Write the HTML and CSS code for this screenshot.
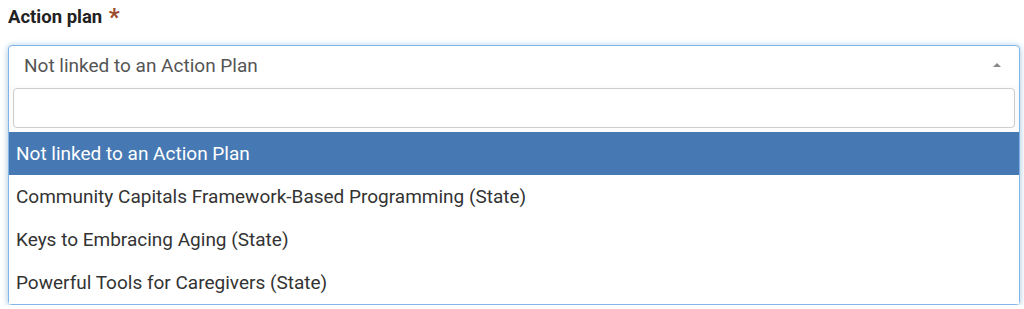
FILE: index.html
```html
<!DOCTYPE html>
<html lang="en">
<head>
  <meta charset="UTF-8" />
  <title>Action plan</title>
  <link rel="stylesheet" href="styles.css">
</head>
<body>

  <div class="form-group">
    <label class="field-label">Action plan <span class="required">*</span></label>

    <div class="select-box open">
      <div class="select-current">
        <span>Not linked to an Action Plan</span>
        <span class="arrow"></span>
      </div>
      <div class="select-dropdown">
        <div class="search-wrap">
          <input type="text" class="search" />
        </div>
        <ul class="options">
          <li class="highlighted">Not linked to an Action Plan</li>
          <li>Community Capitals Framework-Based Programming (State)</li>
          <li>Keys to Embracing Aging (State)</li>
          <li>Powerful Tools for Caregivers (State)</li>
        </ul>
      </div>
    </div>

    <span class="peek"></span>
  </div>

</body>
</html>
```

FILE: styles.css
```css
body {
  margin: 0;
  padding: 0 4px 0 8px;
  font-family: Roboto, 'Noto Sans', sans-serif;
  color: #333;
  background: #fff;
  overflow: hidden;
}

.form-group {
  position: relative;
}

.field-label {
  display: block;
  font-size: 18.5px;
  font-weight: bold;
  color: #222;
  padding-top: 6px;
  height: 39px;
  line-height: 22px;
}

.required {
  color: #9c4a2c;
  font-size: 24px;
  margin-left: 2px;
  vertical-align: -2px;
}

.select-box {
  position: relative;
  z-index: 2;
  border: 1px solid #7fb5e8;
  border-radius: 4px;
  background: #fff;
  box-shadow: 0 0 6px rgba(102, 175, 233, 0.45), 0 3px 6px rgba(0, 0, 0, 0.12);
}

.select-current {
  display: flex;
  justify-content: space-between;
  align-items: center;
  height: 39px;
  padding: 0 18px 0 15px;
  font-size: 19px;
  color: #555;
}

.arrow {
  width: 0;
  height: 0;
  border-left: 4px solid transparent;
  border-right: 4px solid transparent;
  border-bottom: 4px solid #888;
  margin-top: -2px;
}

.select-dropdown {
  background: #fcfcfc;
}

.search-wrap {
  padding: 3px 4px 4px 4px;
}

.search {
  display: block;
  width: 100%;
  box-sizing: border-box;
  height: 40px;
  border: 1px solid #ccc;
  border-radius: 4px;
  background: #fff;
}

.options {
  list-style: none;
  margin: 0;
  padding: 0;
  background: #fff;
}

.options li {
  height: 43px;
  line-height: 43px;
  padding-left: 7px;
  font-size: 19px;
  color: #333;
}

.options li.highlighted {
  background: #4679b3;
  color: #fff;
}

.peek {
  position: absolute;
  z-index: 3;
  top: 305px;
  left: 89px;
  width: 7px;
  height: 2px;
  background: #222;
  border-radius: 1px;
}
```
